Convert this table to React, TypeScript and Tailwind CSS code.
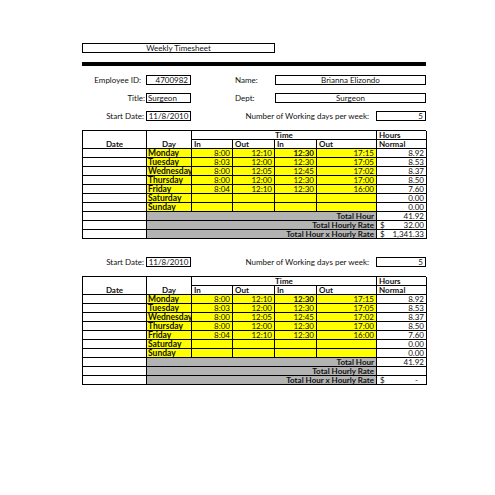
import React from "react";

interface DayRow {
  day: string;
  in1?: string;
  out1?: string;
  in2?: string;
  out2?: string;
  hrs: string;
  boldIn2?: boolean;
}

const days: DayRow[] = [
  { day: "Monday", in1: "8:00", out1: "12:10", in2: "12:30", out2: "17:15", hrs: "8.92", boldIn2: true },
  { day: "Tuesday", in1: "8:03", out1: "12:00", in2: "12:30", out2: "17:05", hrs: "8.53" },
  { day: "Wednesday", in1: "8:00", out1: "12:05", in2: "12:45", out2: "17:02", hrs: "8.37" },
  { day: "Thursday", in1: "8:00", out1: "12:00", in2: "12:30", out2: "17:00", hrs: "8.50" },
  { day: "Friday", in1: "8:04", out1: "12:10", in2: "12:30", out2: "16:00", hrs: "7.60" },
  { day: "Saturday", hrs: "0.00" },
  { day: "Sunday", hrs: "0.00" },
];

const cell = "border-r border-b border-black h-[9px] flex items-end overflow-hidden whitespace-nowrap leading-[8px]";

function Field({ value, align = "center", className = "" }: { value: string; align?: "left" | "center" | "right"; className?: string }) {
  const a = align === "left" ? "justify-start pl-[1px]" : align === "right" ? "justify-end pr-[2px]" : "justify-center";
  return (
    <div className={`h-[10px] border border-black flex items-center leading-[8px] ${a} ${className}`}>
      {value}
    </div>
  );
}

function StartDateRow() {
  return (
    <div className="flex items-center h-[10px]">
      <div className="w-[64px] text-right pr-[2px]">Start Date:</div>
      <Field value="11/8/2010" className="w-[45px]" />
      <div className="flex-1 text-right pr-[7px]">Number of Working days per week:</div>
      <Field value="5" align="right" className="w-[50px]" />
    </div>
  );
}

function Sheet({ rate, total }: { rate?: string; total: string }) {
  return (
    <div className="grid grid-cols-[64px_45px_41px_42px_42px_60px_50px] border-l border-t border-black">
      <div className={`${cell} row-span-2 h-[18px] justify-center font-bold`}>Date</div>
      <div className={`${cell} row-span-2 h-[18px] justify-center font-bold`}>Day</div>
      <div className={`${cell} col-span-4 justify-center font-bold`}>Time</div>
      <div className={`${cell} pl-[2px] font-bold`}>Hours</div>
      <div className={`${cell} pl-[2px] font-bold`}>In</div>
      <div className={`${cell} pl-[2px] font-bold`}>Out</div>
      <div className={`${cell} pl-[2px] font-bold`}>In</div>
      <div className={`${cell} pl-[2px] font-bold`}>Out</div>
      <div className={`${cell} pl-[2px] font-bold`}>Normal</div>
      {days.map((d) => (
        <React.Fragment key={d.day}>
          <div className={cell} />
          <div className={`${cell} bg-[#ffff00] pl-[1px] font-bold text-[8.5px]`}>{d.day}</div>
          <div className={`${cell} bg-[#ffff00] justify-end pr-[2px]`}>{d.in1}</div>
          <div className={`${cell} bg-[#ffff00] justify-end pr-[2px]`}>{d.out1}</div>
          <div className={`${cell} bg-[#ffff00] justify-end pr-[2px] ${d.boldIn2 ? "font-bold" : ""}`}>{d.in2}</div>
          <div className={`${cell} bg-[#ffff00] justify-end pr-[2px]`}>{d.out2}</div>
          <div className={`${cell} justify-end pr-[2px]`}>{d.hrs}</div>
        </React.Fragment>
      ))}
      <div className={cell} />
      <div className={`${cell} col-span-5 bg-[#b3b3b3] justify-end pr-[2px] font-bold`}>Total Hour</div>
      <div className={`${cell} justify-end pr-[2px]`}>41.92</div>
      <div className={cell} />
      <div className={`${cell} col-span-5 bg-[#b3b3b3] justify-end pr-[2px] font-bold`}>Total Hourly Rate</div>
      <div className={`${cell} justify-between pl-[3px] pr-[2px]`}>
        {rate && <span>$</span>}
        {rate && <span>{rate}</span>}
      </div>
      <div className={cell} />
      <div className={`${cell} col-span-5 bg-[#b3b3b3] justify-end pr-[2px] font-bold`}>Total Hour x Hourly Rate</div>
      <div className={`${cell} justify-between pl-[3px] pr-[2px]`}>
        <span>$</span>
        <span className={rate ? "" : "pr-[6px]"}>{total}</span>
      </div>
    </div>
  );
}

export default function App() {
  return (
    <div className="w-[495px] h-[495px] bg-white text-[#111] text-[8px] font-['Lato',sans-serif]">
      <div className="ml-[82px] w-[344px] pt-[43px] flex flex-col">
        <Field value="Weekly Timesheet" className="w-[193px]" />
        <div className="mt-[9px] h-[4px] bg-black" />

        <div className="mt-[9px] flex flex-col gap-[8px]">
          <div className="flex items-center h-[10px]">
            <div className="w-[64px] text-right pr-[5px]">Employee ID:</div>
            <Field value="4700982" align="right" className="w-[45px]" />
            <div className="w-[43px]" />
            <div className="w-[41px] pl-[1px]">Name:</div>
            <Field value="Brianna Elizondo" className="flex-1" />
          </div>
          <div className="flex items-center h-[10px]">
            <div className="w-[64px] text-right pr-[1px]">Title:</div>
            <Field value="Surgeon" align="left" className="w-[45px]" />
            <div className="w-[43px]" />
            <div className="w-[41px] pl-[1px]">Dept:</div>
            <Field value="Surgeon" className="flex-1" />
          </div>
          <StartDateRow />
        </div>

        <div className="mt-[9px]">
          <Sheet rate="32.00" total="1,341.33" />
        </div>

        <div className="mt-[18px]">
          <StartDateRow />
        </div>
        <div className="mt-[9px]">
          <Sheet total="-" />
        </div>
      </div>
    </div>
  );
}
